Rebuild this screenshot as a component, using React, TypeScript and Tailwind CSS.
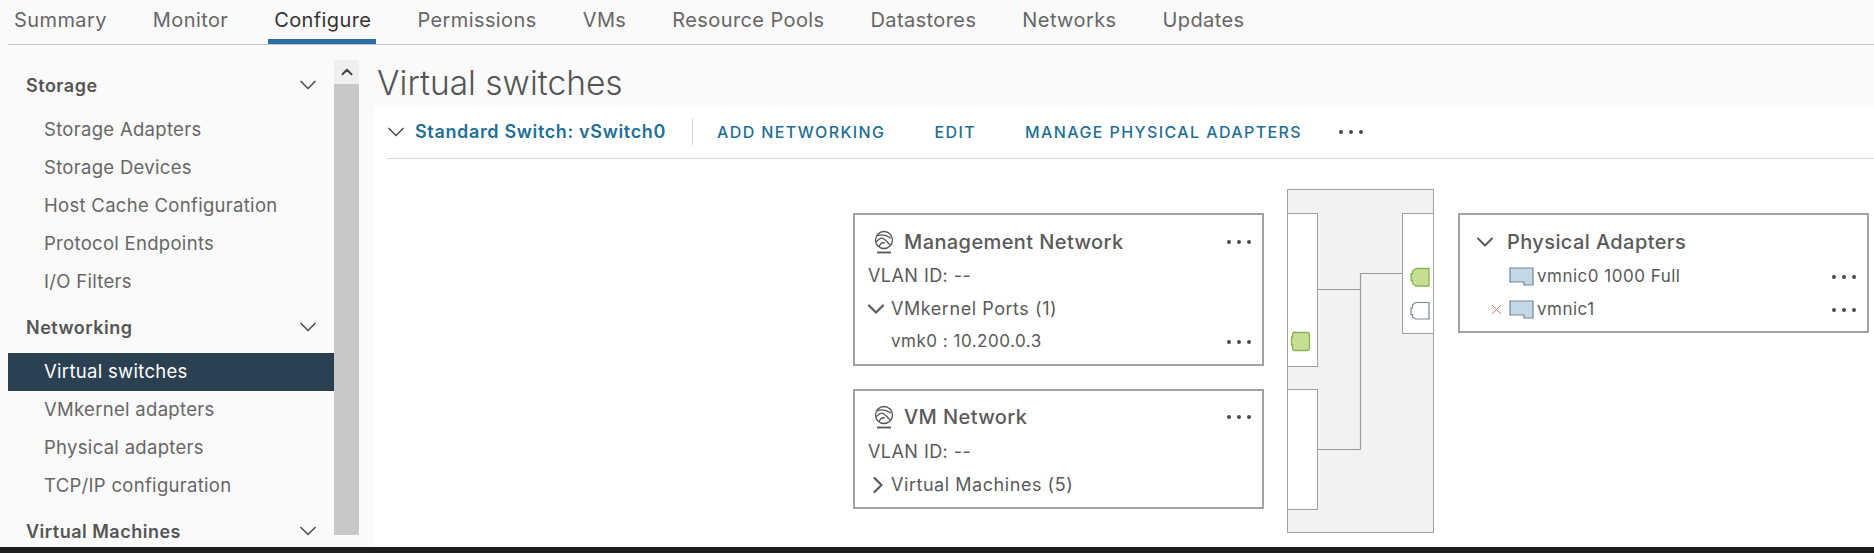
import React from 'react';
import { ChevronDown, ChevronRight, ChevronUp, X } from 'lucide-react';

const tabs = ['Summary', 'Monitor', 'Configure', 'Permissions', 'VMs', 'Resource Pools', 'Datastores', 'Networks', 'Updates'];

const navGroups = [
    { title: 'Storage', items: ['Storage Adapters', 'Storage Devices', 'Host Cache Configuration', 'Protocol Endpoints', 'I/O Filters'] },
    { title: 'Networking', items: ['Virtual switches', 'VMkernel adapters', 'Physical adapters', 'TCP/IP configuration'] },
    { title: 'Virtual Machines', items: [] as string[] },
];

const Dots = () => (
    <span className="flex w-[24px] shrink-0 justify-between">
        <span className="h-[4px] w-[4px] rounded-full bg-[#4a4a4a]"></span>
        <span className="h-[4px] w-[4px] rounded-full bg-[#4a4a4a]"></span>
        <span className="h-[4px] w-[4px] rounded-full bg-[#4a4a4a]"></span>
    </span>
);

const NetworkIcon = () => (
    <svg width="22" height="24" viewBox="0 0 22 24" fill="none" stroke="#555" strokeWidth="1.3" className="shrink-0">
        <circle cx="11" cy="10" r="8.5" />
        <path d="M4 6c4-2 9-1 14 2M3 12c3-3 5-5 8-3s5 5 6 6M6 17c1-3 3-5 6-4" />
        <path d="M4 22.5h14" strokeWidth="1.8" />
    </svg>
);

const NicIcon = () => (
    <svg width="25" height="19" viewBox="0 0 25 19" className="shrink-0">
        <path d="M1 1h23v17h-9v-3H1z" fill="#c5d7e5" stroke="#6f8797" strokeWidth="1.2" />
    </svg>
);

const SwitchDiagram = () => (
    <svg width="147" height="344" viewBox="0 0 147 344" className="shrink-0" fill="none">
        <rect x="0.5" y="0.5" width="146" height="343" fill="#f2f2f2" stroke="#a0a0a0" />
        <rect x="0.5" y="24.5" width="30" height="153" fill="#fff" stroke="#a0a0a0" />
        <rect x="0.5" y="200.5" width="30" height="120" fill="#fff" stroke="#a0a0a0" />
        <rect x="115.5" y="24.5" width="31" height="120" fill="#fff" stroke="#a0a0a0" />
        <path d="M30 100.5h43.5M73.5 84.5v176M30 260.5h43.5M73.5 84.5h42" stroke="#9a9a9a" strokeWidth="1.2" />
        <path d="M8 143.500h12a2.500 2.500 0 0 1 2.500 2.500v13a2.500 2.500 0 0 1-2.500 2.500H8a2.500 2.500 0 0 1-2.500-2.500v-3h-1v-8h1v-2.500a2.500 2.500 0 0 1 2.500-2.500z" fill="#c5de94" stroke="#8ab34f" strokeWidth="1.3" />
        <path d="M142 79.500h-13l-3.500 2.500v3h-1.500v6.500h1.500v3l3.500 2.500h13z" fill="#c5de94" stroke="#8ab34f" strokeWidth="1.3" />
        <path d="M142 113.500h-13.500l-3 2.500v3h-1.500v6.500h1.500v2.500l3 2h13.500z" fill="#fff" stroke="#6f8797" strokeWidth="1.2" />
    </svg>
);

const Card = ({ children, className }: { children: React.ReactNode; className: string }) => (
    <div className={`border-2 border-[#a2a2a2] bg-white ${className}`}>{children}</div>
);

const App: React.FC = () => {
    return (
        <div className="flex h-[553px] w-[1874px] flex-col overflow-hidden bg-[#fafafa] text-[#5a5a5a]" style={{ fontFamily: 'Inter, "Noto Sans", sans-serif' }}>
            {/* tabs */}
            <div className="ml-2 flex h-[45px] shrink-0 gap-[46px] border-b border-[#c8c8c8] pl-[6px] text-[20px] leading-[40px] tracking-[0.4px]">
                {tabs.map(tab => (
                    <div key={tab} className={tab === 'Configure' ? 'relative h-[44px] text-[#333]' : 'h-[44px] text-[#666]'}>
                        {tab}
                        {tab === 'Configure' && <div className="absolute -left-[6px] -right-[5px] bottom-0 h-[5px] bg-[#2a6ea4]"></div>}
                    </div>
                ))}
            </div>

            <div className="flex min-h-0 flex-1">
                {/* sidebar */}
                <div className="w-[334px] shrink-0 overflow-hidden pl-2 pt-[21px]">
                    {navGroups.map(group => (
                        <div key={group.title} className="mb-[7px]">
                            <div className="mb-[7px] flex h-[38px] items-center justify-between pl-[18px] pr-[12px] text-[18px] font-semibold tracking-[0.5px] text-[#555]">
                                {group.title}
                                <ChevronDown size={28} strokeWidth={1.5} />
                            </div>
                            {group.items.map(item => (
                                <div key={item} className={item === 'Virtual switches' ? 'flex h-[38px] items-center bg-[#2b4051] pl-[36px] text-[18.5px] tracking-[0.3px] text-white' : 'flex h-[38px] items-center pl-[36px] text-[18.5px] tracking-[0.3px] text-[#666]'}>
                                    {item}
                                </div>
                            ))}
                        </div>
                    ))}
                </div>

                {/* scrollbar */}
                <div className="flex w-[25px] shrink-0 flex-col pt-[15px]">
                    <div className="flex h-[24px] items-center justify-center bg-[#efefef] text-[#444]">
                        <ChevronUp size={18} strokeWidth={2.6} />
                    </div>
                    <div className="h-[451px] bg-[#c8c8c8]"></div>
                </div>

                {/* main */}
                <div className="ml-[15px] flex min-w-0 flex-1 flex-col">
                    <div className="flex h-[62px] shrink-0 items-center pl-[3px] pt-[14px] text-[33.5px] font-light text-[#555]">Virtual switches</div>
                    <div className="flex-1 bg-white pl-[13px]">
                        <div className="flex h-[52px] items-center border-b border-[#d8d8d8] pb-[2px] text-[16px] tracking-[1.4px] text-[#1f6f96]">
                            <ChevronDown size={28} strokeWidth={1.5} className="-ml-[5px] mr-[5px] text-[#555]" />
                            <span className="text-[18px] font-semibold tracking-[0.65px]">Standard Switch: vSwitch0</span>
                            <div className="ml-[26px] mr-[24px] h-[27px] w-px bg-[#d8d8d8]"></div>
                            <span className="mr-[49px] font-medium">ADD NETWORKING</span>
                            <span className="mr-[49px] font-medium">EDIT</span>
                            <span className="mr-[37px] font-medium">MANAGE PHYSICAL ADAPTERS</span>
                            <Dots />
                        </div>
                        <div className="flex pl-[466px] pt-[30px]">
                            {/* port groups */}
                            <div className="mr-[23px] flex w-[411px] flex-col gap-[23px] pt-[24px]">
                                <Card className="h-[153px] pl-[13px] pr-[11px] pt-[12px]">
                                    <div className="flex h-[30px] items-center">
                                        <span className="ml-[5px] mr-[9px] flex"><NetworkIcon /></span>
                                        <span className="flex-1 text-[20px] font-medium tracking-[0.4px]">Management Network</span>
                                        <Dots />
                                    </div>
                                    <div className="mt-[2px] flex h-[33px] items-center text-[18px] tracking-[0.45px]">VLAN ID: --</div>
                                    <div className="flex h-[33px] items-center text-[18px] tracking-[0.55px]">
                                        <ChevronDown size={28} strokeWidth={1.9} className="-ml-[6px] mr-[1px]" />
                                        VMkernel Ports (1)
                                    </div>
                                    <div className="flex h-[33px] items-center pl-[23px] text-[17px] tracking-[0.5px]">
                                        <span className="flex-1">vmk0 : 10.200.0.3</span>
                                        <Dots />
                                    </div>
                                </Card>
                                <Card className="h-[120px] pl-[13px] pr-[11px] pt-[11px]">
                                    <div className="flex h-[30px] items-center">
                                        <span className="ml-[5px] mr-[9px] flex"><NetworkIcon /></span>
                                        <span className="flex-1 text-[20px] font-medium tracking-[0.4px]">VM Network</span>
                                        <Dots />
                                    </div>
                                    <div className="mt-[3px] flex h-[33px] items-center text-[18px] tracking-[0.45px]">VLAN ID: --</div>
                                    <div className="flex h-[33px] items-center text-[18px] tracking-[0.55px]">
                                        <ChevronRight size={28} strokeWidth={1.9} className="-ml-[4px] -mr-[1px]" />
                                        Virtual Machines (5)
                                    </div>
                                </Card>
                            </div>

                            <SwitchDiagram />

                            {/* physical adapters */}
                            <div className="ml-[24px] w-[411px] pt-[24px]">
                                <Card className="h-[120px] pl-[18px] pr-[11px] pt-[12px]">
                                    <div className="flex h-[30px] items-center text-[20px] font-medium tracking-[0.4px]">
                                        <ChevronDown size={28} strokeWidth={1.6} className="-ml-[7px] mr-[8px]" />
                                        Physical Adapters
                                    </div>
                                    <div className="mt-[3px] flex h-[33px] items-center pl-[31px] text-[17px] tracking-[0.5px]">
                                        <NicIcon />
                                        <span className="ml-[3px] flex-1">vmnic0 1000 Full</span>
                                        <Dots />
                                    </div>
                                    <div className="relative flex h-[33px] items-center pl-[31px] text-[17px] tracking-[0.5px]">
                                        <X size={17} strokeWidth={1.4} className="absolute left-[10px] text-[#d9746c]" />
                                        <NicIcon />
                                        <span className="ml-[3px] flex-1">vmnic1</span>
                                        <Dots />
                                    </div>
                                </Card>
                            </div>
                        </div>
                    </div>
                </div>
            </div>

            <div className="h-[6px] shrink-0 bg-[#1e1e1e]"></div>
        </div>
    );
};

export default App;
